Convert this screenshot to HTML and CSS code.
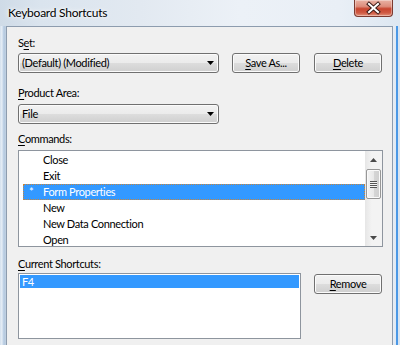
FILE: index.html
```html
<!DOCTYPE html>
<html>
<head>
<meta charset="utf-8">
<link rel="stylesheet" href="styles.css">
</head>
<body>
<div class="window">
  <div class="titlebar">
    <span class="title">Keyboard Shortcuts</span>
    <div class="close">
      <svg width="37" height="16" viewBox="0 0 37 16">
        <path d="M14 4 L23 12 M23 4 L14 12" stroke="#3a1a16" stroke-width="4" stroke-linecap="square" fill="none"/>
        <path d="M14 4 L23 12 M23 4 L14 12" stroke="#ffffff" stroke-width="2" stroke-linecap="square" fill="none"/>
      </svg>
    </div>
  </div>
  <div class="frame">
    <div class="edge-left"></div>
    <div class="client">
      <div class="label l-set">S<u>e</u>t:</div>
      <div class="row row-set">
        <div class="combo combo-set"><span>(Default) (Modified)</span><svg class="arrow" width="7" height="4" viewBox="0 0 7 4"><path d="M0 0 H7 L3.5 4 Z" fill="#000"/></svg></div>
        <div class="btn btn-save"><u>S</u>ave As...</div>
        <div class="btn btn-delete"><u>D</u>elete</div>
      </div>
      <div class="label l-area"><u>P</u>roduct Area:</div>
      <div class="row">
        <div class="combo combo-area"><span>File</span><svg class="arrow" width="7" height="4" viewBox="0 0 7 4"><path d="M0 0 H7 L3.5 4 Z" fill="#000"/></svg></div>
      </div>
      <div class="label l-cmd"><u>C</u>ommands:</div>
      <div class="listbox commands">
        <div class="items">
          <div class="item"><span class="mark"></span><span>Close</span></div>
          <div class="item"><span class="mark"></span><span>Exit</span></div>
          <div class="item selected"><span class="mark">*</span><span>Form Properties</span></div>
          <div class="item"><span class="mark"></span><span>New</span></div>
          <div class="item"><span class="mark"></span><span>New Data Connection</span></div>
          <div class="item"><span class="mark"></span><span>Open</span></div>
        </div>
        <div class="scrollbar">
          <div class="sb-btn"><svg width="7" height="4" viewBox="0 0 7 4"><path d="M0 4 H7 L3.5 0 Z" fill="#4a4a4a"/></svg></div>
          <div class="thumb"><span class="grip"></span></div>
          <div class="sb-space"></div>
          <div class="sb-btn"><svg width="7" height="4" viewBox="0 0 7 4"><path d="M0 0 H7 L3.5 4 Z" fill="#4a4a4a"/></svg></div>
        </div>
      </div>
      <div class="label l-cur"><u>C</u>urrent Shortcuts:</div>
      <div class="row row-cur">
        <div class="listbox shortcuts">
          <div class="sc-item">F4</div>
        </div>
        <div class="btn btn-remove"><u>R</u>emove</div>
      </div>
    </div>
    <div class="edge-right"></div>
  </div>
</div>
</body>
</html>
```
FILE: styles.css
```css
* { box-sizing: border-box; }
html, body {
  margin: 0;
  width: 400px;
  height: 345px;
  overflow: hidden;
}
body {
  font-family: Lato, "Liberation Sans", sans-serif;
  font-size: 11px;
  letter-spacing: -0.35px;
  color: #000;
  background: #dbe5ef;
}
u { text-decoration-thickness: 1px; text-underline-offset: 2px; }

.window {
  display: flex;
  flex-direction: column;
  height: 345px;
}
.titlebar {
  height: 26px;
  flex: none;
  display: flex;
  align-items: flex-start;
  background: linear-gradient(to right, #cfdbe7 0px, #dae4ee 40px, #e2e9f1 140px, #ecf1f7 240px, #e9eff6 340px, #dde7f1 400px);
}
.title {
  padding: 6px 0 0 8px;
  font-size: 12px;
  letter-spacing: -0.25px;
  line-height: 14px;
  text-shadow: 0 0 6px #fff, 0 0 3px #fff;
}
.close {
  margin-left: auto;
  margin-right: 7px;
  width: 39px;
  height: 17px;
  border: 1px solid #7b3a30;
  border-top: none;
  border-radius: 0 0 4px 4px;
  background: linear-gradient(#e9b2a4 0%, #dd8d7c 40%, #c8452f 55%, #cf5a43 80%, #e3937c 100%);
  box-shadow: inset 0 0 0 1px rgba(255,255,255,0.35);
  display: flex;
}
.close svg { display: block; }

.frame {
  flex: 1;
  display: flex;
}
.edge-left {
  width: 6px;
  flex: none;
  background: linear-gradient(to right, #d3e0ed 0px, #e8eff7 2px, #c2d4e7 3px, #b4c8de 5px, #c9d6e4 6px);
}
.edge-right {
  width: 7px;
  flex: none;
  background: linear-gradient(to right, #e6edf5 0px, #dfe8f2 3px, #4a98e6 3px, #4a98e6 5px, #d8e4f1 5px);
}
.client {
  flex: 1;
  background: #f0f0f0;
  border: 1px solid #8d9cae;
  border-bottom: none;
  padding: 9px 9px 0 11px;
  display: flex;
  flex-direction: column;
}
.label {
  line-height: 14px;
  height: 14px;
}
.l-set { margin-bottom: 3px; }
.l-area { margin-top: 13px; margin-bottom: 4px; }
.l-cmd { margin-top: 8px; margin-bottom: 4px; }
.l-cur { margin-top: 10px; margin-bottom: 2px; }

.row { display: flex; align-items: flex-start; }

.btn, .combo {
  height: 20px;
  border: 1px solid #707070;
  border-radius: 3px;
  background: linear-gradient(#f2f2f2 0%, #ebebeb 50%, #dddddd 50%, #cfcfcf 100%);
  box-shadow: inset 0 0 0 1px #fbfbfb;
  line-height: 18px;
}
.btn {
  width: 68px;
  text-align: center;
  flex: none;
}
.btn-save { margin-left: 13px; }
.btn-delete { margin-left: 14px; }
.btn-remove { margin-left: 13px; margin-top: 1px; }

.combo {
  width: 201px;
  display: flex;
  align-items: center;
  justify-content: space-between;
  padding: 0 4px 0 3px;
  flex: none;
}
.combo .arrow { display: block; }

.listbox {
  background: #fff;
  border: 1px solid #8e959e;
}
.commands {
  height: 97px;
  display: flex;
  padding: 1px 0 0 0;
}
.items {
  flex: 1;
  padding-left: 4px;
}
.item {
  height: 16px;
  line-height: 16px;
  display: grid;
  grid-template-columns: 20px 1fr;
}
.item .mark { padding-left: 6px; }
.item.selected {
  background: #3399ff;
  outline: 1px dotted #c8853a;
  outline-offset: -1px;
  color: #fff;
}
.scrollbar {
  width: 17px;
  flex: none;
  margin-top: -1px;
  display: flex;
  flex-direction: column;
  background: linear-gradient(to right, #e6e6e6, #f3f3f3 40%, #f3f3f3);
}
.sb-btn {
  height: 17px;
  display: flex;
  align-items: center;
  justify-content: center;
}
.sb-btn svg { display: block; }
.thumb {
  margin: 1px 1px 0 1px;
  height: 30px;
  border: 1px solid #979797;
  border-radius: 2px;
  background: linear-gradient(to right, #f4f4f4 0%, #e9e9e9 50%, #d6d6d6 51%, #cfcfcf 100%);
  box-shadow: inset 0 0 0 1px #fafafa;
  display: flex;
  align-items: center;
  justify-content: center;
}
.grip {
  width: 7px;
  height: 7px;
  background: repeating-linear-gradient(#555 0px, #555 1px, #f5f5f5 1px, #f5f5f5 2px);
}
.sb-space { flex: 1; }

.row-cur { align-items: flex-start; }
.shortcuts {
  width: 283px;
  height: 66px;
  padding: 1px;
  flex: none;
}
.sc-item {
  height: 13px;
  line-height: 13px;
  background: #3399ff;
  color: #fff;
  padding-left: 2px;
}
```
